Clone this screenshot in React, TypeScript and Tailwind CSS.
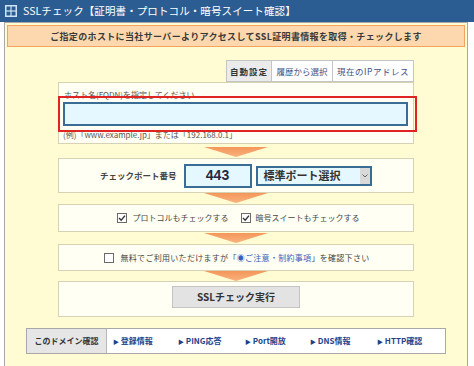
import React from "react";

const Arrow = ({ h, t }: { h: string; t: string }) => (
  <div className={`${h} flex justify-center items-start`}>
    <svg width="64" height="10" viewBox="0 0 64 10" className={t}>
      <defs>
        <linearGradient id="og" x1="0" y1="0" x2="0" y2="1">
          <stop offset="0" stopColor="#f4965a" />
          <stop offset="1" stopColor="#f9b27e" />
        </linearGradient>
      </defs>
      <polygon points="0,0 64,0 32,10" fill="url(#og)" />
    </svg>
  </div>
);

const Check = ({ checked }: { checked: boolean }) => (
  <svg width="10" height="10" viewBox="0 0 10 10" className="shrink-0">
    <rect x="0.5" y="0.5" width="9" height="9" fill="#fff" stroke="#6b6b6b" />
    {checked && <polyline points="2,5 4.2,7.2 8,2.6" fill="none" stroke="#333" strokeWidth="1.4" />}
  </svg>
);

export default function App() {
  return (
    <div className="w-[474px] h-[366px] overflow-hidden bg-white font-['Noto_Sans_CJK_JP','Noto_Sans',sans-serif] text-[#333]">
      <div className="h-[22px] bg-[#2c5d92] flex items-center pl-[5px] gap-[6px]">
        <svg width="12" height="12" viewBox="0 0 12 12">
          <rect x="0.75" y="0.75" width="10.5" height="10.5" fill="none" stroke="#cfe3f7" strokeWidth="1.5" />
          <line x1="6" y1="1" x2="6" y2="11" stroke="#cfe3f7" strokeWidth="1.2" />
          <line x1="1" y1="6" x2="11" y2="6" stroke="#cfe3f7" strokeWidth="1.2" />
        </svg>
        <span className="text-white text-[10.5px] leading-none tracking-[0.1px]">SSLチェック【証明書・プロトコル・暗号スイート確認】</span>
      </div>
      <div className="ml-[4px] w-[464px] h-[400px] border border-[#a8a8a8] bg-[#fffcd3] pt-[2px]">
        <div className="mx-[2px] h-[22px] border border-[#f2a35f] bg-[#fdd8ae] flex items-center justify-center text-[9px] font-bold tracking-[0.35px] leading-none text-[#3a3a3a]">
          ご指定のホストに当社サーバーよりアクセスしてSSL証明書情報を取得・チェックします
        </div>
        <div className="w-[356px] mx-auto mt-[13px]">
          <div className="flex justify-end h-[22px] text-[8.5px] leading-none">
            <div className="w-[46px] border border-[#c4c4c4] bg-[#ebebeb] flex items-center justify-center font-bold text-[#333] tracking-[1px]">自動設定</div>
            <div className="w-[61px] border border-l-0 border-[#c4c4c4] bg-white flex items-center justify-center text-[#3b4f86]">履歴から選択</div>
            <div className="w-[81px] border border-l-0 border-[#c4c4c4] bg-white flex items-center justify-center text-[#3b4f86] tracking-[0.5px]">現在のIPアドレス</div>
          </div>
          <div className="relative h-[62px] border border-[#d8d2b4] bg-[#fffff3] pt-[7px] pl-[4px] pr-[5px]">
            <div className="text-[8px] leading-[10px] text-[#555] pl-[1px]">ホスト名(FQDN)を指定してください</div>
            <div className="mt-[2px] h-[24px] border-2 border-[#3a6d96] bg-[#e6f8ff]"></div>
            <div className="mt-[4px] text-[8px] leading-[10px] text-[#555]">(例)「www.example.jp」または「192.168.0.1」</div>
            <div className="absolute left-[-1px] top-[13px] w-[359px] h-[36px] border-2 border-[#e02424]"></div>
          </div>
          <Arrow h="h-[14px]" t="mt-[3px]" />
          <div className="h-[35px] border border-[#d8d2b4] bg-[#fffff3] flex items-center pl-[41px]">
            <span className="text-[8.5px] font-bold text-[#444] leading-none">チェックポート番号</span>
            <div className="ml-[7px] w-[68px] h-[24px] border-2 border-[#3a6d96] bg-[#e6f8ff] flex items-center justify-center text-[14px] font-bold text-[#1f2a44] font-['Liberation_Sans',sans-serif]">443</div>
            <div className="ml-[4px] w-[116px] h-[20px] border-2 border-[#3a6d96] bg-[#e6f8ff] flex items-center">
              <span className="flex-1 pl-[6px] text-[11px] font-bold leading-none text-[#333]">標準ポート選択</span>
              <div className="w-[10px] h-full bg-[#d9d9d9] flex items-center justify-center">
                <svg width="6" height="4" viewBox="0 0 6 4"><polyline points="0.5,0.5 3,3 5.5,0.5" fill="none" stroke="#666" strokeWidth="1" /></svg>
              </div>
            </div>
          </div>
          <Arrow h="h-[11px]" t="mt-[0px]" />
          <div className="h-[28px] border border-[#d8d2b4] bg-[#fffff3] flex items-center justify-center gap-[12px] text-[8px] leading-none text-[#444] pl-[4px]">
            <div className="flex items-center gap-[6px]"><Check checked />プロトコルもチェックする</div>
            <div className="flex items-center gap-[5px]"><Check checked />暗号スイートもチェックする</div>
          </div>
          <Arrow h="h-[12px]" t="mt-[1px]" />
          <div className="h-[27px] border border-[#d8d2b4] bg-[#fffff3] flex items-center justify-center gap-[6px] text-[8px] leading-none text-[#444] pl-[2px]">
            <Check checked={false} />
            <span className="tracking-[0.3px]">無料でご利用いただけますが「<span className="text-[#3a5fbf]">◉ご注意・制約事項</span>」を確認下さい</span>
          </div>
          <Arrow h="h-[10px]" t="mt-[0px]" />
          <div className="h-[36px] border border-[#d8d2b4] bg-[#fffff3] flex justify-center pt-[4px]">
            <div className="w-[128px] h-[22px] border border-[#c4c4c4] bg-[#e3e3e3] flex items-center justify-center text-[10px] font-bold text-[#333] leading-none">SSLチェック実行</div>
          </div>
        </div>
        <div className="w-[420px] mx-auto mt-[11px] h-[26px] border border-[#a8a8a8] bg-white flex items-stretch text-[8px] font-bold leading-none">
          <div className="w-[80px] bg-[#e6e6e6] border-r border-[#b8b8b8] flex items-center justify-center text-[#333]">このドメイン確認</div>
          <div className="flex items-center pl-[6px] text-[#223f8a]">
            <div className="w-[65px]"><span className="text-[6px]">▶</span> 登録情報</div>
            <div className="w-[67px]"><span className="text-[6px]">▶</span> PING応答</div>
            <div className="w-[65px]"><span className="text-[6px]">▶</span> Port開放</div>
            <div className="w-[67px]"><span className="text-[6px]">▶</span> DNS情報</div>
            <div className="w-[60px]"><span className="text-[6px]">▶</span> HTTP確認</div>
          </div>
        </div>
      </div>
    </div>
  );
}
